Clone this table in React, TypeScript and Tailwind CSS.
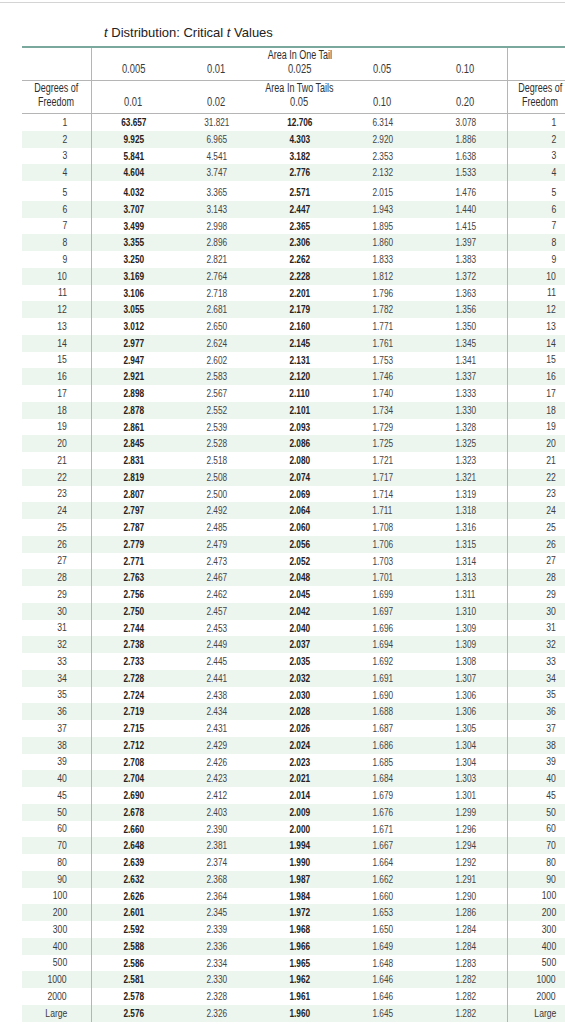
const ROWS: [string, string, string, string, string, string][] = [
  ["1", "63.657", "31.821", "12.706", "6.314", "3.078"],
  ["2", "9.925", "6.965", "4.303", "2.920", "1.886"],
  ["3", "5.841", "4.541", "3.182", "2.353", "1.638"],
  ["4", "4.604", "3.747", "2.776", "2.132", "1.533"],
  ["5", "4.032", "3.365", "2.571", "2.015", "1.476"],
  ["6", "3.707", "3.143", "2.447", "1.943", "1.440"],
  ["7", "3.499", "2.998", "2.365", "1.895", "1.415"],
  ["8", "3.355", "2.896", "2.306", "1.860", "1.397"],
  ["9", "3.250", "2.821", "2.262", "1.833", "1.383"],
  ["10", "3.169", "2.764", "2.228", "1.812", "1.372"],
  ["11", "3.106", "2.718", "2.201", "1.796", "1.363"],
  ["12", "3.055", "2.681", "2.179", "1.782", "1.356"],
  ["13", "3.012", "2.650", "2.160", "1.771", "1.350"],
  ["14", "2.977", "2.624", "2.145", "1.761", "1.345"],
  ["15", "2.947", "2.602", "2.131", "1.753", "1.341"],
  ["16", "2.921", "2.583", "2.120", "1.746", "1.337"],
  ["17", "2.898", "2.567", "2.110", "1.740", "1.333"],
  ["18", "2.878", "2.552", "2.101", "1.734", "1.330"],
  ["19", "2.861", "2.539", "2.093", "1.729", "1.328"],
  ["20", "2.845", "2.528", "2.086", "1.725", "1.325"],
  ["21", "2.831", "2.518", "2.080", "1.721", "1.323"],
  ["22", "2.819", "2.508", "2.074", "1.717", "1.321"],
  ["23", "2.807", "2.500", "2.069", "1.714", "1.319"],
  ["24", "2.797", "2.492", "2.064", "1.711", "1.318"],
  ["25", "2.787", "2.485", "2.060", "1.708", "1.316"],
  ["26", "2.779", "2.479", "2.056", "1.706", "1.315"],
  ["27", "2.771", "2.473", "2.052", "1.703", "1.314"],
  ["28", "2.763", "2.467", "2.048", "1.701", "1.313"],
  ["29", "2.756", "2.462", "2.045", "1.699", "1.311"],
  ["30", "2.750", "2.457", "2.042", "1.697", "1.310"],
  ["31", "2.744", "2.453", "2.040", "1.696", "1.309"],
  ["32", "2.738", "2.449", "2.037", "1.694", "1.309"],
  ["33", "2.733", "2.445", "2.035", "1.692", "1.308"],
  ["34", "2.728", "2.441", "2.032", "1.691", "1.307"],
  ["35", "2.724", "2.438", "2.030", "1.690", "1.306"],
  ["36", "2.719", "2.434", "2.028", "1.688", "1.306"],
  ["37", "2.715", "2.431", "2.026", "1.687", "1.305"],
  ["38", "2.712", "2.429", "2.024", "1.686", "1.304"],
  ["39", "2.708", "2.426", "2.023", "1.685", "1.304"],
  ["40", "2.704", "2.423", "2.021", "1.684", "1.303"],
  ["45", "2.690", "2.412", "2.014", "1.679", "1.301"],
  ["50", "2.678", "2.403", "2.009", "1.676", "1.299"],
  ["60", "2.660", "2.390", "2.000", "1.671", "1.296"],
  ["70", "2.648", "2.381", "1.994", "1.667", "1.294"],
  ["80", "2.639", "2.374", "1.990", "1.664", "1.292"],
  ["90", "2.632", "2.368", "1.987", "1.662", "1.291"],
  ["100", "2.626", "2.364", "1.984", "1.660", "1.290"],
  ["200", "2.601", "2.345", "1.972", "1.653", "1.286"],
  ["300", "2.592", "2.339", "1.968", "1.650", "1.284"],
  ["400", "2.588", "2.336", "1.966", "1.649", "1.284"],
  ["500", "2.586", "2.334", "1.965", "1.648", "1.283"],
  ["1000", "2.581", "2.330", "1.962", "1.646", "1.282"],
  ["2000", "2.578", "2.328", "1.961", "1.646", "1.282"],
  ["Large", "2.576", "2.326", "1.960", "1.645", "1.282"],
];

const ONE_TAIL = ["0.005", "0.01", "0.025", "0.05", "0.10"];
const TWO_TAILS = ["0.01", "0.02", "0.05", "0.10", "0.20"];

// the printed table uses a condensed face; squeeze Liberation Sans horizontally
function Narrow({ children, right }: { children: React.ReactNode; right?: boolean }) {
  return (
    <span className={`inline-block whitespace-nowrap scale-x-[0.75] ${right ? "origin-right" : "origin-center"}`}>
      {children}
    </span>
  );
}

function HeaderBand({ label, values, withDf }: { label: string; values: string[]; withDf?: boolean }) {
  const df = (
    <>
      <div className="h-[11px] leading-[11px] text-[12px]">
        <Narrow>Degrees of</Narrow>
      </div>
      <div className="mt-[2px] h-[12px] leading-[12px] text-[12px]">
        <Narrow>Freedom</Narrow>
      </div>
    </>
  );
  return (
    <div className="flex text-[#2e2e2e]">
      <div className="w-[70px] shrink-0 border-r border-[#b5b5b5] flex flex-col items-center pt-[2px] pb-[5px]">
        {withDf && df}
      </div>
      <div className="w-[415px] shrink-0 flex flex-col pt-[2px] pb-[5px]">
        <div className="h-[11px] leading-[11px] text-[12px] text-center">
          <Narrow>{label}</Narrow>
        </div>
        <div className="mt-[2px] flex">
          {values.map((v) => (
            <div key={v} className="w-[83px] h-[12px] leading-[12px] text-[12.5px] text-center text-[#3a3a3a]">
              <Narrow>{v}</Narrow>
            </div>
          ))}
        </div>
      </div>
      <div className="w-[66px] shrink-0 border-l border-[#b5b5b5] flex flex-col items-center pt-[2px] pb-[5px]">
        {withDf && df}
      </div>
    </div>
  );
}

function DataRow({ row, striped }: { row: string[]; striped: boolean }) {
  const [df, ...vals] = row;
  return (
    <div className={`flex h-[16.75px] items-center ${striped ? "bg-[#edf5ef]" : ""}`}>
      <div className="w-[70px] h-full shrink-0 border-r border-[#b5b5b5] flex items-center justify-end pr-[24px] text-[11.5px] text-[#3a3a3a]">
        <Narrow right>{df}</Narrow>
      </div>
      {vals.map((v, i) => (
        <div
          key={i}
          className={`w-[83px] shrink-0 text-center text-[11px] ${i === 0 || i === 2 ? "font-bold text-[#222]" : "text-[#444]"}`}
        >
          <Narrow>{v}</Narrow>
        </div>
      ))}
      <div className="w-[66px] h-full shrink-0 border-l border-[#b5b5b5] flex items-center justify-end pr-[17px] text-[11.5px] text-[#3a3a3a]">
        <Narrow right>{df}</Narrow>
      </div>
    </div>
  );
}

export default function App() {
  return (
    <div className="w-[565px] h-[1024px] overflow-hidden bg-white font-['Liberation_Sans',sans-serif]">
      <div className="mt-[2px] h-px bg-[#d4d4d4]" />
      <h1 className="mt-[22px] pl-[104px] h-[16px] leading-[16px] text-[13px] text-[#222]">
        <i>t</i> Distribution: Critical <i>t</i> Values
      </h1>
      <div className="ml-[22px] mt-[5px] w-[560px]">
        <div className="h-[2px] bg-[#7aa89c]" />
        <HeaderBand label="Area In One Tail" values={ONE_TAIL} />
        <div className="h-px bg-[#b5b5b5]" />
        <HeaderBand label="Area In Two Tails" values={TWO_TAILS} withDf />
        <div className="h-px bg-[#b5b5b5]" />
        {ROWS.map((row, i) => (
          <div key={row[0]}>
            {i === 4 && (
              <div className="flex h-[3px]">
                <div className="w-[70px] border-r border-[#b5b5b5]" />
                <div className="w-[415px]" />
                <div className="w-[66px] border-l border-[#b5b5b5]" />
              </div>
            )}
            <DataRow row={row} striped={i % 2 === 1} />
          </div>
        ))}
      </div>
    </div>
  );
}
